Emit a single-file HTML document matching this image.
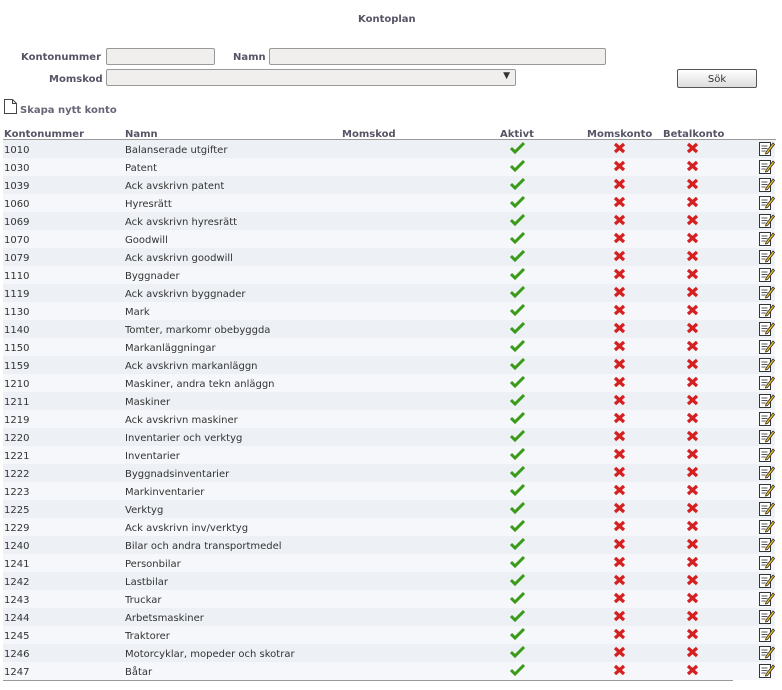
<!DOCTYPE html>
<html><head><meta charset="utf-8"><style>
body{margin:0;background:#fff;font-family:Verdana,"DejaVu Sans",sans-serif;font-size:10px;color:#333;width:782px;height:690px;overflow:hidden;position:relative}
.a{position:absolute}
.b{font-weight:bold;color:#555566}
.inp{position:absolute;border:1px solid #999;border-radius:2px;background:#f0efed;height:15px}
.row{position:absolute;left:3px;width:772px;height:18px;line-height:18px}
.row span{position:absolute}
.c1{left:1px;top:2px}.c2{left:122px;top:2px}
.ck{left:507px;top:1px}.x1{left:610px;top:2px}.x2{left:683px;top:2px}.ed{left:755px;top:0px}
</style></head><body>
<div class="a b" style="left:358px;top:14px">Kontoplan</div>
<div class="a b" style="left:21px;top:52px">Kontonummer</div>
<div class="inp" style="left:106px;top:48px;width:107px"></div>
<div class="a b" style="left:233px;top:52px">Namn</div>
<div class="inp" style="left:269px;top:48px;width:335px"></div>
<div class="a b" style="left:49px;top:74px">Momskod</div>
<div class="inp" style="left:106px;top:69px;width:408px"><span style="position:absolute;right:5px;top:1px;font-size:9px;color:#333">▼</span></div>
<div class="a" style="left:677px;top:69px;width:78px;height:17px;border:1px solid #555;border-radius:2px;background:linear-gradient(#fff,#ddd);text-align:center;line-height:19px;color:#333">Sök</div>
<svg class="a" style="left:4px;top:99px" width="13" height="15"><path d="M0.5 0.5H8.5L12.5 4.5V14.5H0.5Z M8.5 0.5V4.5H12.5" fill="#fff" stroke="#444"/></svg>
<div class="a b" style="left:20px;top:105px;color:#667">Skapa nytt konto</div>
<div class="a b" style="left:4px;top:129px">Kontonummer</div>
<div class="a b" style="left:125px;top:129px">Namn</div>
<div class="a b" style="left:342px;top:129px">Momskod</div>
<div class="a b" style="left:500px;top:129px">Aktivt</div>
<div class="a b" style="left:587px;top:129px">Momskonto</div>
<div class="a b" style="left:663px;top:129px">Betalkonto</div>
<div class="a" style="left:3px;top:139px;width:773px;height:1px;background:#999"></div>
<div id="t"></div>
<div class="a" style="left:3px;top:680px;width:730px;height:1px;background:#999"></div>
<script>
var d=[["1010","Balanserade utgifter"],["1030","Patent"],["1039","Ack avskrivn patent"],["1060","Hyresrätt"],["1069","Ack avskrivn hyresrätt"],["1070","Goodwill"],["1079","Ack avskrivn goodwill"],["1110","Byggnader"],["1119","Ack avskrivn byggnader"],["1130","Mark"],["1140","Tomter, markomr obebyggda"],["1150","Markanläggningar"],["1159","Ack avskrivn markanläggn"],["1210","Maskiner, andra tekn anläggn"],["1211","Maskiner"],["1219","Ack avskrivn maskiner"],["1220","Inventarier och verktyg"],["1221","Inventarier"],["1222","Byggnadsinventarier"],["1223","Markinventarier"],["1225","Verktyg"],["1229","Ack avskrivn inv/verktyg"],["1240","Bilar och andra transportmedel"],["1241","Personbilar"],["1242","Lastbilar"],["1243","Truckar"],["1244","Arbetsmaskiner"],["1245","Traktorer"],["1246","Motorcyklar, mopeder och skotrar"],["1247","Båtar"]];
var ck='<svg width="15" height="14"><path d="M1 7L5 11L14 2" fill="none" stroke="#3a9a1a" stroke-width="3"/></svg>';
var x='<svg width="13" height="12"><path d="M2 2L11 10M11 2L2 10" stroke="#d42020" stroke-width="3.2"/></svg>';
var ed='<svg width="17" height="16"><rect x="1.5" y="2.5" width="11" height="13" fill="#fff" stroke="#333"/><path d="M3.5 6h6M3.5 8.5h6M3.5 11h4" stroke="#555"/><path d="M8 12L15 3L16.5 4.5L9.5 13.5L7.5 14Z" fill="#f0c020" stroke="#333" stroke-width="0.8"/></svg>';
var h='';
for(var i=0;i<d.length;i++){h+='<div class="row" style="top:'+(140+i*18)+'px;background:'+(i%2?'#f5f7fa':'#edf0f5')+'"><span class="c1">'+d[i][0]+'</span><span class="c2">'+d[i][1]+'</span><span class="ck">'+ck+'</span><span class="x1">'+x+'</span><span class="x2">'+x+'</span><span class="ed">'+ed+'</span></div>';}
document.getElementById('t').innerHTML=h;
</script>
</body></html>
